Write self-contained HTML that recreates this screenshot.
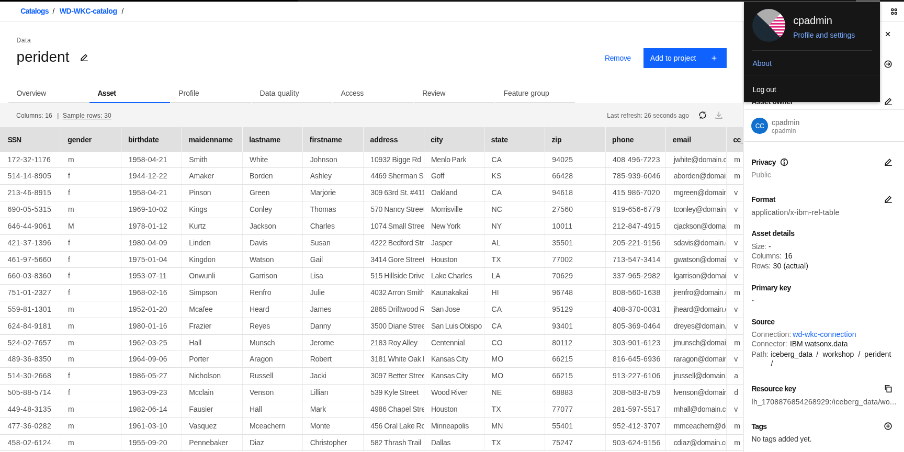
<!DOCTYPE html>
<html lang="en"><head><meta charset="utf-8"><title>perident - WD-WKC-catalog</title>
<style>
html,body{margin:0;padding:0;width:904px;height:452px;overflow:hidden;background:#fff}
#stage{position:absolute;left:0;top:0;width:1728px;height:864px;transform:scale(0.523148);transform-origin:0 0;will-change:transform;font-family:"Liberation Sans",sans-serif;font-size:14px;color:#161616;overflow:hidden}
#stage div,#stage a{position:absolute;white-space:nowrap;box-sizing:border-box;text-decoration:none;display:block}
svg{position:absolute;overflow:visible}
.hdr{left:0;top:0;width:1728px;height:2.8px;background:#161616}
.hdr2{left:0;top:0;width:570px;height:2.8px;background:#000}
.hdrbtn{left:1636px;top:0;width:46px;height:2.8px;background:#5a5a5a}
.crumbbar{left:0;top:3px;width:1728px;height:38px;border-bottom:1px solid #e0e0e0;background:#fff}
.btn{left:1230px;top:92px;width:159px;height:38px;background:#0f62fe}
.tab{top:160px;width:154px;height:37px;border-bottom:2px solid #e0e0e0}
.tab.on{border-bottom-color:#0f62fe}
.gray{left:0;top:197px;width:1422px;height:667px;background:#f4f4f4}
.tbl{left:0;top:243.2px;width:1420px;height:622px;background:#fff;overflow:hidden}
.thead{left:0;top:0;width:1422px;height:46.4px;background:#e0e0e0}
.th{top:0;width:115.65px;height:46.4px;line-height:48.6px;padding-left:12.6px;font-weight:bold;font-size:14px;color:#161616;overflow:hidden;border-left:1px solid #f6f6f6;letter-spacing:-0.12px}
.tr{left:0;width:1422px;height:31.82px;border-bottom:1px solid #e0e0e0}
.td{top:0;width:115.65px;height:30.8px;line-height:31.8px;padding-left:13.4px;font-size:14px;color:#525252;overflow:hidden;border-left:1px solid #ededed}
.panel{left:1420px;top:41px;width:308px;height:823px;background:#fff;border-left:2px solid #ebebeb}
.hr{left:1423px;width:305px;height:1px;background:#e0e0e0}
.menu{left:1422px;top:3px;width:260px;height:192px;background:#161616;box-shadow:0 2px 6px rgba(0,0,0,.3)}
.ico{stroke:#161616;fill:none;stroke-width:1.6}
.c0{border-left:0;padding-left:14.4px}
.c0{left:0.00px;letter-spacing:0.40px;word-spacing:0.0px;text-indent:0.0px}
.c1{left:115.65px;letter-spacing:0.00px;word-spacing:0.0px;text-indent:0.0px}
.c2{left:231.30px;letter-spacing:0.25px;word-spacing:0.0px;text-indent:0.0px}
.c3{left:346.95px;letter-spacing:-0.10px;word-spacing:0.0px;text-indent:0.0px}
.c4{left:462.60px;letter-spacing:-0.10px;word-spacing:0.0px;text-indent:0.0px}
.c5{left:578.25px;letter-spacing:-0.15px;word-spacing:0.0px;text-indent:0.0px}
.c6{left:693.90px;letter-spacing:-0.15px;word-spacing:-0.8px;text-indent:0.0px}
.c7{left:809.55px;letter-spacing:-0.25px;word-spacing:-1.0px;text-indent:0.0px}
.c8{left:925.20px;letter-spacing:0.00px;word-spacing:0.0px;text-indent:0.0px}
.c9{left:1040.85px;letter-spacing:0.22px;word-spacing:0.0px;text-indent:0.0px}
.c10{left:1156.50px;letter-spacing:0.38px;word-spacing:0.0px;text-indent:0.0px}
.c11{left:1272.15px;letter-spacing:-0.36px;word-spacing:0.0px;text-indent:1.2px}
.c12{left:1387.80px;letter-spacing:0.00px;word-spacing:0.0px;text-indent:1.0px}
</style></head>
<body>
<div id="stage">
<div class="hdr"></div><div class="hdr2"></div><div class="hdrbtn"></div>
<div class="crumbbar"></div>
<a href="#" style="left:39.2px;top:12.4px;font-size:14px;line-height:18px;letter-spacing:-0.70px;color:#0f62fe;font-weight:bold;">Catalogs</a>
<div style="left:100.5px;top:12.4px;font-size:14px;line-height:18px;letter-spacing:-0.45px;color:#161616;">/</div>
<a href="#" style="left:113.7px;top:12.4px;font-size:14px;line-height:18px;letter-spacing:-0.37px;color:#0f62fe;font-weight:bold;">WD-WKC-catalog</a>
<div style="left:232.4px;top:12.4px;font-size:14px;line-height:18px;letter-spacing:-0.45px;color:#161616;">/</div>
<svg style="left:1701.3px;top:13.8px" width="16" height="16" viewBox="0 0 16 16"><g class="ico" stroke-width="1"><rect x="3" y="2.8" width="3.6" height="3.6" rx="1"/><circle cx="11.2" cy="4.6" r="1.9"/><rect x="3" y="9.6" width="3.6" height="3.6" rx="1"/><rect x="9.4" y="9.6" width="3.6" height="3.6" rx="1"/></g></svg>
<div style="left:31.5px;top:68.5px;font-size:12px;line-height:16px;letter-spacing:0.59px;color:#525252;">Data</div>
<div style="left:31.5px;top:91.0px;font-size:28px;line-height:36px;letter-spacing:-0.04px;color:#161616;">perident</div>
<svg style="left:152.9px;top:101.2px" width="16" height="16" viewBox="0 0 16 16"><g class="ico" stroke-width="0.95"><path d="M2.5 11.1 L10.3 3.3 L12.9 5.9 L5.1 13.7 L2.2 14 Z"/><path d="M1.4 15.3 H14.8" stroke-width="1.4"/></g></svg>
<a href="#" style="left:1155.9px;top:102.2px;font-size:14px;line-height:18px;letter-spacing:-0.34px;color:#0f62fe;">Remove</a>
<div class="btn"></div>
<div style="left:1242.7px;top:102.2px;font-size:14px;line-height:18px;letter-spacing:0.10px;color:#ffffff;">Add to project</div>
<svg style="left:1358.4px;top:104.2px" width="14" height="14" viewBox="0 0 14 14"><path d="M7 2.6 V11.4 M2.6 7 H11.4" stroke="#fff" stroke-width="1.25" fill="none"/></svg>
<div class="tab" style="left:16px"></div>
<div style="left:31.5px;top:169.0px;font-size:14px;line-height:18px;letter-spacing:-0.24px;color:#525252;">Overview</div>
<div class="tab on" style="left:171px"></div>
<div style="left:186.4px;top:169.0px;font-size:14px;line-height:18px;letter-spacing:-0.65px;color:#161616;font-weight:bold;">Asset</div>
<div class="tab" style="left:326px"></div>
<div style="left:341.2px;top:169.0px;font-size:14px;line-height:18px;letter-spacing:-0.00px;color:#525252;">Profile</div>
<div class="tab" style="left:481px"></div>
<div style="left:496.4px;top:169.0px;font-size:14px;line-height:18px;letter-spacing:0.13px;color:#525252;">Data quality</div>
<div class="tab" style="left:636px"></div>
<div style="left:651.4px;top:169.0px;font-size:14px;line-height:18px;letter-spacing:-0.23px;color:#525252;">Access</div>
<div class="tab" style="left:791px"></div>
<div style="left:807.2px;top:169.0px;font-size:14px;line-height:18px;letter-spacing:-0.36px;color:#525252;">Review</div>
<div class="tab" style="left:946px"></div>
<div style="left:962.4px;top:169.0px;font-size:14px;line-height:18px;letter-spacing:-0.05px;color:#525252;">Feature group</div>
<div class="gray"></div>
<div style="left:31.1px;top:212.8px;font-size:12px;line-height:16px;letter-spacing:0.12px;color:#525252;">Columns: 16</div>
<div style="left:109.3px;top:212.8px;font-size:12px;line-height:16px;letter-spacing:-1.21px;color:#525252;">|</div>
<div style="left:119.9px;top:212.8px;font-size:12px;line-height:16px;letter-spacing:0.25px;color:#525252;line-height:12px;margin-top:2px;border-bottom:1px solid #393939;">Sample rows: 30</div>
<div style="left:1160.3px;top:212.6px;font-size:12px;line-height:16px;letter-spacing:0.07px;color:#666666;">Last refresh: 26 seconds ago</div>
<svg style="left:1335.0px;top:212.2px" width="16" height="16" viewBox="0 0 16 16"><g class="ico" stroke-width="1.5"><path d="M2.6 9.6 A5.6 5.6 0 0 1 11.8 3.8"/><path d="M13.4 6.4 A5.6 5.6 0 0 1 4.2 12.2"/><path d="M12.6 1.2 V4.4 H9.4" stroke-width="1.3"/><path d="M3.4 14.8 V11.6 H6.6" stroke-width="1.3"/></g></svg>
<svg style="left:1366.4px;top:212.2px" width="16" height="16" viewBox="0 0 16 16"><g stroke="#a8a8a8" fill="none" stroke-width="1.4"><path d="M8 1.5 V10.5 M4 6.8 L8 10.8 L12 6.8 M2.3 12 V14.2 H13.7 V12"/></g></svg>
<div class="tbl">
<div class="thead"><div class="th" style="left:0.00px;letter-spacing:-1.1px;padding-left:14.6px;border-left:0">SSN</div><div class="th" style="left:115.65px">gender</div><div class="th" style="left:231.30px">birthdate</div><div class="th" style="left:346.95px">maidenname</div><div class="th" style="left:462.60px">lastname</div><div class="th" style="left:578.25px">firstname</div><div class="th" style="left:693.90px">address</div><div class="th" style="left:809.55px">city</div><div class="th" style="left:925.20px">state</div><div class="th" style="left:1040.85px">zip</div><div class="th" style="left:1156.50px">phone</div><div class="th" style="left:1272.15px">email</div><div class="th" style="left:1387.80px;letter-spacing:-0.7px">cc_num</div></div>
<div class="tr" style="top:46.40px"><div class="td c0">172-32-1176</div><div class="td c1">m</div><div class="td c2">1958-04-21</div><div class="td c3">Smith</div><div class="td c4">White</div><div class="td c5">Johnson</div><div class="td c6">10932 Bigge Rd</div><div class="td c7">Menlo Park</div><div class="td c8">CA</div><div class="td c9">94025</div><div class="td c10">408 496-7223</div><div class="td c11">jwhite@domain.com</div><div class="td c12">m</div></div>
<div class="tr" style="top:78.22px"><div class="td c0">514-14-8905</div><div class="td c1">f</div><div class="td c2">1944-12-22</div><div class="td c3">Amaker</div><div class="td c4">Borden</div><div class="td c5">Ashley</div><div class="td c6">4469 Sherman Street</div><div class="td c7">Goff</div><div class="td c8">KS</div><div class="td c9">66428</div><div class="td c10">785-939-6046</div><div class="td c11">aborden@domain.com</div><div class="td c12">m</div></div>
<div class="tr" style="top:110.04px"><div class="td c0">213-46-8915</div><div class="td c1">f</div><div class="td c2">1958-04-21</div><div class="td c3">Pinson</div><div class="td c4">Green</div><div class="td c5">Marjorie</div><div class="td c6">309 63rd St. #411</div><div class="td c7">Oakland</div><div class="td c8">CA</div><div class="td c9">94618</div><div class="td c10">415 986-7020</div><div class="td c11">mgreen@domain.com</div><div class="td c12">v</div></div>
<div class="tr" style="top:141.86px"><div class="td c0">690-05-5315</div><div class="td c1">m</div><div class="td c2">1969-10-02</div><div class="td c3">Kings</div><div class="td c4">Conley</div><div class="td c5">Thomas</div><div class="td c6">570 Nancy Street</div><div class="td c7">Morrisville</div><div class="td c8">NC</div><div class="td c9">27560</div><div class="td c10">919-656-6779</div><div class="td c11">tconley@domain.com</div><div class="td c12">v</div></div>
<div class="tr" style="top:173.68px"><div class="td c0">646-44-9061</div><div class="td c1">M</div><div class="td c2">1978-01-12</div><div class="td c3">Kurtz</div><div class="td c4">Jackson</div><div class="td c5">Charles</div><div class="td c6">1074 Small Street</div><div class="td c7">New York</div><div class="td c8">NY</div><div class="td c9">10011</div><div class="td c10">212-847-4915</div><div class="td c11">cjackson@domain.com</div><div class="td c12">m</div></div>
<div class="tr" style="top:205.50px"><div class="td c0">421-37-1396</div><div class="td c1">f</div><div class="td c2">1980-04-09</div><div class="td c3">Linden</div><div class="td c4">Davis</div><div class="td c5">Susan</div><div class="td c6">4222 Bedford Street</div><div class="td c7">Jasper</div><div class="td c8">AL</div><div class="td c9">35501</div><div class="td c10">205-221-9156</div><div class="td c11">sdavis@domain.com</div><div class="td c12">v</div></div>
<div class="tr" style="top:237.32px"><div class="td c0">461-97-5660</div><div class="td c1">f</div><div class="td c2">1975-01-04</div><div class="td c3">Kingdon</div><div class="td c4">Watson</div><div class="td c5">Gail</div><div class="td c6">3414 Gore Street</div><div class="td c7">Houston</div><div class="td c8">TX</div><div class="td c9">77002</div><div class="td c10">713-547-3414</div><div class="td c11">gwatson@domain.com</div><div class="td c12">v</div></div>
<div class="tr" style="top:269.14px"><div class="td c0">660-03-8360</div><div class="td c1">f</div><div class="td c2">1953-07-11</div><div class="td c3">Onwunli</div><div class="td c4">Garrison</div><div class="td c5">Lisa</div><div class="td c6">515 Hillside Drive</div><div class="td c7">Lake Charles</div><div class="td c8">LA</div><div class="td c9">70629</div><div class="td c10">337-965-2982</div><div class="td c11">lgarrison@domain.com</div><div class="td c12">v</div></div>
<div class="tr" style="top:300.96px"><div class="td c0">751-01-2327</div><div class="td c1">f</div><div class="td c2">1968-02-16</div><div class="td c3">Simpson</div><div class="td c4">Renfro</div><div class="td c5">Julie</div><div class="td c6">4032 Arron Smith Drive</div><div class="td c7">Kaunakakai</div><div class="td c8">HI</div><div class="td c9">96748</div><div class="td c10">808-560-1638</div><div class="td c11">jrenfro@domain.com</div><div class="td c12">m</div></div>
<div class="tr" style="top:332.78px"><div class="td c0">559-81-1301</div><div class="td c1">m</div><div class="td c2">1952-01-20</div><div class="td c3">Mcafee</div><div class="td c4">Heard</div><div class="td c5">James</div><div class="td c6">2865 Driftwood Road</div><div class="td c7">San Jose</div><div class="td c8">CA</div><div class="td c9">95129</div><div class="td c10">408-370-0031</div><div class="td c11">jheard@domain.com</div><div class="td c12">v</div></div>
<div class="tr" style="top:364.60px"><div class="td c0">624-84-9181</div><div class="td c1">m</div><div class="td c2">1980-01-16</div><div class="td c3">Frazier</div><div class="td c4">Reyes</div><div class="td c5">Danny</div><div class="td c6">3500 Diane Street</div><div class="td c7">San Luis Obispo</div><div class="td c8">CA</div><div class="td c9">93401</div><div class="td c10">805-369-0464</div><div class="td c11">dreyes@domain.com</div><div class="td c12">v</div></div>
<div class="tr" style="top:396.42px"><div class="td c0">524-02-7657</div><div class="td c1">m</div><div class="td c2">1962-03-25</div><div class="td c3">Hall</div><div class="td c4">Munsch</div><div class="td c5">Jerome</div><div class="td c6">2183 Roy Alley</div><div class="td c7">Centennial</div><div class="td c8">CO</div><div class="td c9">80112</div><div class="td c10">303-901-6123</div><div class="td c11">jmunsch@domain.com</div><div class="td c12">m</div></div>
<div class="tr" style="top:428.24px"><div class="td c0">489-36-8350</div><div class="td c1">m</div><div class="td c2">1964-09-06</div><div class="td c3">Porter</div><div class="td c4">Aragon</div><div class="td c5">Robert</div><div class="td c6">3181 White Oak Drive</div><div class="td c7">Kansas City</div><div class="td c8">MO</div><div class="td c9">66215</div><div class="td c10">816-645-6936</div><div class="td c11">raragon@domain.com</div><div class="td c12">v</div></div>
<div class="tr" style="top:460.06px"><div class="td c0">514-30-2668</div><div class="td c1">f</div><div class="td c2">1986-05-27</div><div class="td c3">Nicholson</div><div class="td c4">Russell</div><div class="td c5">Jacki</div><div class="td c6">3097 Better Street</div><div class="td c7">Kansas City</div><div class="td c8">MO</div><div class="td c9">66215</div><div class="td c10">913-227-6106</div><div class="td c11">jrussell@domain.com</div><div class="td c12">a</div></div>
<div class="tr" style="top:491.88px"><div class="td c0">505-88-5714</div><div class="td c1">f</div><div class="td c2">1963-09-23</div><div class="td c3">Mcclain</div><div class="td c4">Venson</div><div class="td c5">Lillian</div><div class="td c6">539 Kyle Street</div><div class="td c7">Wood River</div><div class="td c8">NE</div><div class="td c9">68883</div><div class="td c10">308-583-8759</div><div class="td c11">lvenson@domain.com</div><div class="td c12">d</div></div>
<div class="tr" style="top:523.70px"><div class="td c0">449-48-3135</div><div class="td c1">m</div><div class="td c2">1982-06-14</div><div class="td c3">Fausier</div><div class="td c4">Hall</div><div class="td c5">Mark</div><div class="td c6">4986 Chapel Street</div><div class="td c7">Houston</div><div class="td c8">TX</div><div class="td c9">77077</div><div class="td c10">281-597-5517</div><div class="td c11">mhall@domain.com</div><div class="td c12">v</div></div>
<div class="tr" style="top:555.52px"><div class="td c0">477-36-0282</div><div class="td c1">m</div><div class="td c2">1961-03-10</div><div class="td c3">Vasquez</div><div class="td c4">Mceachern</div><div class="td c5">Monte</div><div class="td c6">456 Oral Lake Road</div><div class="td c7">Minneapolis</div><div class="td c8">MN</div><div class="td c9">55401</div><div class="td c10">952-412-3707</div><div class="td c11">mmceachern@domain.com</div><div class="td c12">m</div></div>
<div class="tr" style="top:587.34px"><div class="td c0">458-02-6124</div><div class="td c1">m</div><div class="td c2">1955-09-20</div><div class="td c3">Pennebaker</div><div class="td c4">Diaz</div><div class="td c5">Christopher</div><div class="td c6">582 Thrash Trail</div><div class="td c7">Dallas</div><div class="td c8">TX</div><div class="td c9">75247</div><div class="td c10">903-624-9156</div><div class="td c11">cdiaz@domain.com</div><div class="td c12">m</div></div>
</div>
<div class="panel"></div>
<svg style="left:1689.4px;top:57.0px" width="16" height="16" viewBox="0 0 16 16"><path class="ico" d="M4.4 4.4 L11.8 11.8 M11.8 4.4 L4.4 11.8" stroke-width="1.3"/></svg>
<svg style="left:1688.9px;top:114.4px" width="17" height="17" viewBox="0 0 17 17"><g class="ico" stroke-width="1.1"><circle cx="8.5" cy="8.5" r="6.3"/><path d="M4.8 8.5 H11.8 M9.2 5.9 L11.8 8.5 L9.2 11.1"/></g></svg>
<div style="left:1436.5px;top:184.6px;font-size:14px;line-height:18px;letter-spacing:-0.36px;color:#161616;font-weight:bold;">Asset owner</div>
<svg style="left:1690.0px;top:184.9px" width="16" height="16" viewBox="0 0 16 16"><g class="ico" stroke-width="0.95"><path d="M2.5 11.1 L10.3 3.3 L12.9 5.9 L5.1 13.7 L2.2 14 Z"/><path d="M1.4 15.3 H14.8" stroke-width="1.4"/></g></svg>
<div class="hr" style="top:209.4px"></div>
<div style="left:1436.4px;top:224.9px;width:31.5px;height:31.5px;border-radius:50%;background:#1170cf"></div>
<div style="left:1443.8px;top:232.8px;font-size:12px;line-height:16px;letter-spacing:-0.16px;color:#ffffff;">CC</div>
<div style="left:1474.9px;top:224.8px;font-size:14px;line-height:18px;letter-spacing:0.06px;color:#6a6a6a;">cpadmin</div>
<div style="left:1474.9px;top:241.5px;font-size:12px;line-height:16px;letter-spacing:0.18px;color:#808080;">cpadmin</div>
<div class="hr" style="top:269.8px"></div>
<div style="left:1436.3px;top:301.4px;font-size:14px;line-height:18px;letter-spacing:-0.45px;color:#161616;font-weight:bold;">Privacy</div>
<svg style="left:1491.2px;top:302.2px" width="16" height="16" viewBox="0 0 16 16"><g class="ico" stroke-width="0.9"><circle cx="8" cy="8" r="6.4"/><path d="M8 7 V11.6 M6.4 11.6 H9.6 M6.8 7 H8"/><circle cx="7.9" cy="4.6" r="0.45" fill="#161616"/></g></svg>
<svg style="left:1690.0px;top:301.2px" width="16" height="16" viewBox="0 0 16 16"><g class="ico" stroke-width="0.95"><path d="M2.5 11.1 L10.3 3.3 L12.9 5.9 L5.1 13.7 L2.2 14 Z"/><path d="M1.4 15.3 H14.8" stroke-width="1.4"/></g></svg>
<div style="left:1436.3px;top:325.1px;font-size:14px;line-height:18px;letter-spacing:-0.11px;color:#8d8d8d;">Public</div>
<div style="left:1436.3px;top:372.3px;font-size:14px;line-height:18px;letter-spacing:-0.29px;color:#161616;font-weight:bold;">Format</div>
<svg style="left:1690.0px;top:371.9px" width="16" height="16" viewBox="0 0 16 16"><g class="ico" stroke-width="0.95"><path d="M2.5 11.1 L10.3 3.3 L12.9 5.9 L5.1 13.7 L2.2 14 Z"/><path d="M1.4 15.3 H14.8" stroke-width="1.4"/></g></svg>
<div style="left:1436.3px;top:396.6px;font-size:14px;line-height:18px;letter-spacing:0.30px;color:#525252;">application/x-ibm-rel-table</div>
<div style="left:1436.5px;top:437.3px;font-size:14px;line-height:18px;letter-spacing:-0.32px;color:#161616;font-weight:bold;">Asset details</div>
<div style="left:1436.5px;top:462.2px;font-size:14px;line-height:18px;letter-spacing:-0.76px;color:#6a6a6a;">Size:</div>
<div style="left:1469.0px;top:462.2px;font-size:14px;line-height:18px;letter-spacing:0.12px;color:#161616;">-</div>
<div style="left:1436.5px;top:480.3px;font-size:14px;line-height:18px;letter-spacing:-0.30px;color:#6a6a6a;">Columns:</div>
<div style="left:1499.2px;top:480.3px;font-size:14px;line-height:18px;letter-spacing:-0.19px;color:#161616;">16</div>
<div style="left:1436.5px;top:498.5px;font-size:14px;line-height:18px;letter-spacing:-0.63px;color:#6a6a6a;">Rows:</div>
<div style="left:1477.6px;top:498.5px;font-size:14px;line-height:18px;letter-spacing:0.11px;color:#161616;">30 (actual)</div>
<div style="left:1436.5px;top:540.6px;font-size:14px;line-height:18px;letter-spacing:-0.35px;color:#161616;font-weight:bold;">Primary key</div>
<div style="left:1436.5px;top:564.5px;font-size:14px;line-height:18px;letter-spacing:0.12px;color:#525252;">-</div>
<div style="left:1436.5px;top:605.7px;font-size:14px;line-height:18px;letter-spacing:-0.58px;color:#161616;font-weight:bold;">Source</div>
<div style="left:1436.5px;top:630.4px;font-size:14px;line-height:18px;letter-spacing:0.11px;color:#6a6a6a;">Connection:</div>
<a href="#" style="left:1515.2px;top:630.4px;font-size:14px;line-height:18px;letter-spacing:0.14px;color:#0f62fe;">wd-wkc-connection</a>
<div style="left:1436.5px;top:648.2px;font-size:14px;line-height:18px;letter-spacing:-0.04px;color:#6a6a6a;">Connector:</div>
<div style="left:1509.9px;top:648.2px;font-size:14px;line-height:18px;letter-spacing:-0.05px;color:#161616;">IBM watsonx.data</div>
<div style="left:1436.5px;top:667.7px;font-size:14px;line-height:18px;letter-spacing:-0.04px;color:#6a6a6a;">Path:</div>
<div style="left:1473.2px;top:667.7px;font-size:14px;line-height:18px;letter-spacing:-0.09px;color:#161616;">iceberg_data</div>
<div style="left:1560.2px;top:667.7px;font-size:14px;line-height:18px;letter-spacing:-0.45px;color:#161616;">/</div>
<div style="left:1572.4px;top:667.7px;font-size:14px;line-height:18px;letter-spacing:0.01px;color:#161616;">workshop</div>
<div style="left:1640.5px;top:667.7px;font-size:14px;line-height:18px;letter-spacing:-0.45px;color:#161616;">/</div>
<div style="left:1652.3px;top:667.7px;font-size:14px;line-height:18px;letter-spacing:0.06px;color:#161616;">perident</div>
<div style="left:1473.4px;top:685.6px;font-size:14px;line-height:18px;letter-spacing:-0.45px;color:#161616;">/</div>
<div style="left:1436.5px;top:733.8px;font-size:14px;line-height:18px;letter-spacing:-0.52px;color:#161616;font-weight:bold;">Resource key</div>
<svg style="left:1689.6px;top:734.8px" width="16" height="16" viewBox="0 0 16 16"><g class="ico" stroke-width="0.9"><rect x="5.2" y="4.8" width="8.4" height="9.6"/><path d="M2.4 10.6 V1.8 H10.6"/></g></svg>
<div style="left:1436.5px;top:758.5px;font-size:14px;line-height:18px;letter-spacing:0.30px;color:#525252;">lh_1708876854268929:/iceberg_data/wo...</div>
<div style="left:1436.5px;top:805.9px;font-size:14px;line-height:18px;letter-spacing:-0.69px;color:#161616;font-weight:bold;">Tags</div>
<svg style="left:1689.1px;top:806.4px" width="17" height="17" viewBox="0 0 17 17"><g class="ico" stroke-width="0.9"><circle cx="8.5" cy="8.5" r="6.4"/><path d="M8.5 5 V12 M5 8.5 H12"/></g></svg>
<div style="left:1436.5px;top:830.2px;font-size:14px;line-height:18px;letter-spacing:-0.15px;color:#393939;">No tags added yet.</div>
<div class="menu"></div>
<svg style="left:1438.3px;top:17.1px" width="63" height="63" viewBox="0 0 64 64"><defs><clipPath id="av"><circle cx="32" cy="32" r="32"/></clipPath></defs><g clip-path="url(#av)"><rect width="64" height="64" fill="#1b2a35"/><path d="M32 32 L-4 -2 H68 Z" fill="#adadad"/><path d="M32 32 L66 -2 V68 Z" fill="#ffffff"/><clipPath id="wg"><path d="M32 32 L66 -2 V68 Z"/></clipPath><g clip-path="url(#wg)" fill="#e0277c"><rect x="30" y="15.5" width="36" height="3.1"/><rect x="30" y="21.4" width="36" height="3.1"/><rect x="30" y="27.3" width="36" height="3.1"/><rect x="30" y="33.2" width="36" height="3.1"/><rect x="30" y="39.1" width="36" height="3.1"/><rect x="30" y="45" width="36" height="3.1"/><rect x="30" y="50.6" width="36" height="3.1"/></g></g></svg>
<div style="left:1516.2px;top:26.2px;font-size:20px;line-height:26px;letter-spacing:-0.15px;color:#f4f4f4;">cpadmin</div>
<a href="#" style="left:1516.2px;top:57.7px;font-size:14px;line-height:18px;letter-spacing:-0.05px;color:#78a9ff;">Profile and settings</a>
<div style="left:1438.4px;top:95.8px;width:228.4px;height:1px;background:#303030"></div>
<a href="#" style="left:1438.4px;top:112.2px;font-size:14px;line-height:18px;letter-spacing:-0.05px;color:#78a9ff;">About</a>
<div style="left:1422.7px;top:143.2px;width:259.4px;height:1px;background:#2c2c2c"></div>
<a href="#" style="left:1438.4px;top:161.5px;font-size:14px;line-height:18px;letter-spacing:-0.26px;color:#f4f4f4;">Log out</a>
</div>
</body></html>
